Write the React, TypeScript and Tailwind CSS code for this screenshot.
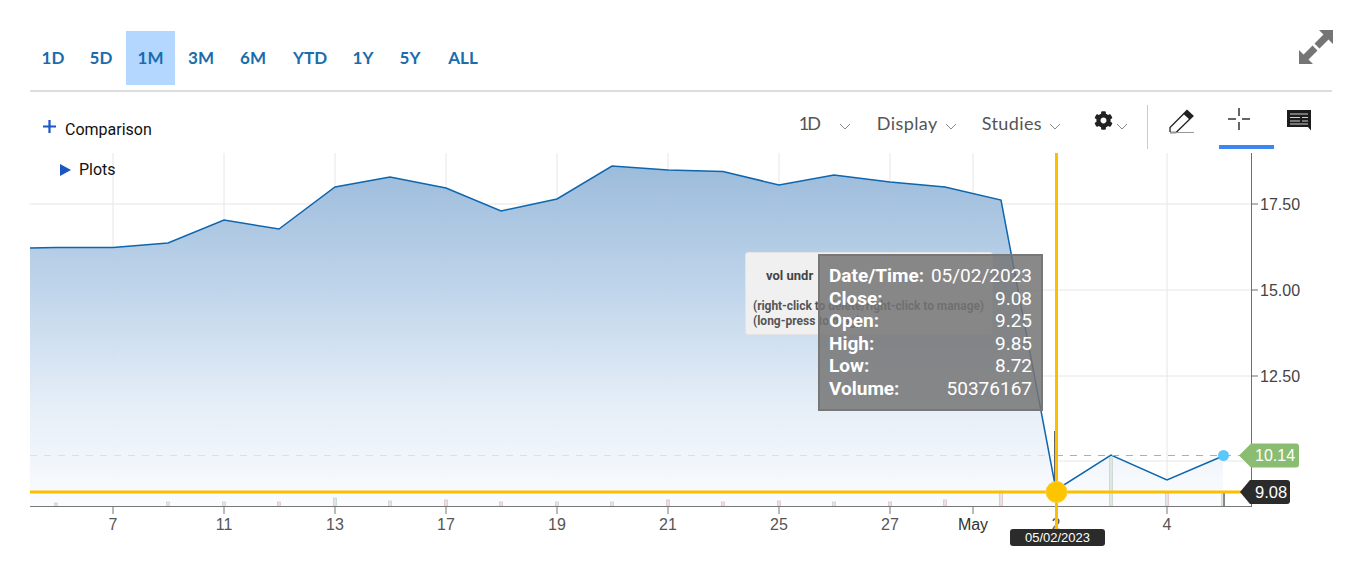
import React from "react";
import { FaCog } from "react-icons/fa";

const ranges = ["1D", "5D", "1M", "3M", "6M", "YTD", "1Y", "5Y", "ALL"];
const rangeX: Record<string, string> = {
  "1D": "w-[46px]", "5D": "w-[50px]", "1M": "w-[49px]", "3M": "w-[52px]", "6M": "w-[52px]", YTD: "w-[62px]", "1Y": "w-[44px]", "5Y": "w-[50px]", ALL: "w-[56px]",
};
const pts: [number, number][] = [[30,248],[56,247.5],[113,247.5],[168,243],[224,220],[279,229],[335,187],[390,177],[446,188],[501,211],[557,199],[612,166],[668,170],[723,171.5],[779,185],[834,175],[890,182],[945,187],[1001,200],[1056,490],[1111,455],[1167,480],[1223,456]];
const line = pts.map((p) => p.join(",")).join(" ");
const area = `30,506 ${line} 1223,506`;
const gridX = [113, 224, 335, 446, 557, 668, 779, 890, 973, 1056, 1167];
const gridY = [204, 290, 376, 461];
const vols: [number, number, boolean][] = [[56,503,true],[168,502,true],[224,502,true],[279,502,false],[335,498,true],[390,501,true],[446,500,false],[501,502,false],[557,502,true],[612,502,true],[668,500,false],[723,502,false],[779,501,false],[834,502,true],[890,502,false],[945,500,false],[1001,491,false],[1111,458,true],[1167,493,false],[1223,492,true]];
const xLabels: [string, number][] = [["7",113],["11",224],["13",335],["17",446],["19",557],["21",668],["25",779],["27",890],["May",973],["2",1056],["4",1167]];
const yLabels: [string, number][] = [["17.50",204],["15.00",290],["12.50",376]];
const rows = [["Date/Time:","05/02/2023"],["Close:","9.08"],["Open:","9.25"],["High:","9.85"],["Low:","8.72"],["Volume:","50376167"]];

function Chevron({ className = "" }: { className?: string }) {
  return (
    <svg className={className} width="12" height="7" viewBox="0 0 12 7" fill="none" stroke="#8a8a8a" strokeWidth="1">
      <path d="M1 1l5 5 5-5" />
    </svg>
  );
}

export default function App() {
  return (
    <div className="relative w-[1358px] h-[573px] bg-white overflow-hidden font-['Lato',sans-serif]">
      <div className="mx-[30px] w-[1302px] h-[92px] pt-[31px] border-b-2 border-[#dddddd] flex justify-between items-start">
        <div className="flex h-[54px]">
          {ranges.map((r) => (
            <div key={r} className={`${rangeX[r]} h-[54px] flex items-center justify-center text-[17px] font-bold text-[#1a6cab] ${r === "1M" ? "bg-[#b3d7ff]" : ""}`}>{r}</div>
          ))}
        </div>
        <svg className="mt-[-2px] mr-[-2px]" width="36" height="36" viewBox="0 0 36 36" fill="#757575">
          <path d="M35 1V15L30.500 10.500L21.500 19.500L16.500 14.500L25.500 5.500L21 1z" />
          <path d="M1 35V21L5.500 25.500L14.500 16.500L19.500 21.500L10.500 30.500L15 35z" />
        </svg>
      </div>

      <div className="mx-[30px] w-[1302px] h-[61px] relative flex items-start">
        <div className="flex items-start pl-[12px] pt-[27px]">
          <svg width="15" height="15" viewBox="0 0 15 15" stroke="#1a56c4" strokeWidth="2.2"><path d="M7.500 1v13M1 7.500h13" /></svg>
          <span className="ml-[8px] mt-[1px] text-[16px] text-[#111] font-['Roboto',sans-serif] leading-[20px]">Comparison</span>
        </div>
        <div className="ml-auto flex items-start h-[61px]">
          <div className="flex items-center pt-[18px] text-[18px] text-[#555] tracking-[0.4px]">
            <span className="tracking-[-2px]">1D</span>
            <Chevron className="ml-[20px] mt-[6px]" />
            <span className="ml-[26px]">Display</span>
            <Chevron className="ml-[7px] mt-[6px]" />
            <span className="ml-[25px]">Studies</span>
            <Chevron className="ml-[7px] mt-[6px]" />
            <FaCog className="ml-[33px] text-[#222] text-[19px] mt-[-6px]" />
            <Chevron className="ml-[3px] mt-[6px]" />
          </div>
          <div className="ml-[19px] mt-[13px] w-px h-[44px] bg-[#cccccc]" />
          <svg className="ml-[20px] mt-[16px]" width="28" height="28" viewBox="0 0 28 28" fill="none">
            <path d="M2 24V19.500L19 2.500l6 5.500L8 24.500H2" stroke="#222" strokeWidth="1.300" />
            <path d="M19 2.500l6 5.500-3.500 3.500-6-5.500z" fill="#222" />
            <path d="M2 24.500h24" stroke="#999" strokeWidth="1" />
          </svg>
          <div className="ml-[23px] w-[55px] h-[57px] border-b-[4px] border-[#3b86f0] flex justify-start pl-[8px] pt-[15px]">
            <svg width="24" height="24" viewBox="0 0 24 24" stroke="#333" strokeWidth="1.500">
              <path d="M12 1v8M12 15v8M1 12h8M15 12h8" />
            </svg>
          </div>
          <svg className="ml-[12px] mt-[17px]" width="26" height="24" viewBox="0 0 26 24">
            <path d="M1 1h24v20.500L22 18H1z" fill="#1c1c1c" />
            <path d="M4 5h18M4 8.500h10M16 8.500h6M4 12h10M16 12h6M4 15h18" stroke="#fff" strokeOpacity="0.8" strokeWidth="1" />
          </svg>
          <div className="w-[20px]" />
        </div>
      </div>

      <svg className="block" width="1358" height="420" viewBox="0 153 1358 420" fontFamily="'Liberation Sans', sans-serif">
        <defs>
          <linearGradient id="f" gradientUnits="userSpaceOnUse" x1="0" y1="166" x2="0" y2="506">
            <stop offset="0" stopColor="#98b9da" />
            <stop offset="0.35" stopColor="#bcd2e9" />
            <stop offset="0.7" stopColor="#e4edf7" />
            <stop offset="1" stopColor="#fbfcfe" />
          </linearGradient>
        </defs>
        {gridX.map((x) => <line key={x} x1={x} x2={x} y1={153} y2={506} stroke="#e6e6e6" />)}
        {gridY.map((y) => <line key={y} x1={30} x2={1251} y1={y} y2={y} stroke="#e6e6e6" />)}
        <polygon points={area} fill="url(#f)" fillOpacity="0.96" />
        {vols.map(([x, y, up]) => (
          <rect key={x} x={x - 1.500} y={y} width="3" height={506 - y} fill="#e4e4e4" stroke={up ? "#bcd6c4" : "#e6bcbc"} strokeWidth="0.7" />
        ))}
        <line x1="1055" x2="1055" y1="431" y2="490" stroke="#333" strokeWidth="1.500" />
        <line x1="1224" x2="1224" y1="492" y2="506" stroke="#333" strokeWidth="1" />
        <polyline points={line} fill="none" stroke="#0d66ae" strokeWidth="1.500" />
        <line x1="30" x2="1056" y1="455.500" y2="455.500" stroke="#94c47e" strokeOpacity="0.3" strokeDasharray="7 7" />
        <line x1="1056" x2="1251" y1="455.500" y2="455.500" stroke="#94c47e" strokeDasharray="7 7" />
        <circle cx="1223.500" cy="455.500" r="5.500" fill="#5ac8fa" />
        <line x1="1251.500" x2="1251.500" y1="153" y2="506" stroke="#6f6f6f" />
        <line x1="30" x2="1252" y1="506.500" y2="506.500" stroke="#777" strokeWidth="1.200" />
        {gridY.slice(0, 3).map((y) => <line key={y} x1="1251" x2="1258" y1={y} y2={y} stroke="#6f6f6f" />)}
        {xLabels.map(([t, x]) => <line key={t} x1={x} x2={x} y1="507" y2="514" stroke="#777" />)}
        {xLabels.map(([t, x]) => (
          <text key={t} x={x} y="530" textAnchor="middle" fontSize="16" fill={t === "May" ? "#333" : "#555"}>{t}</text>
        ))}
        {yLabels.map(([t, y]) => (
          <text key={t} x="1260" y={y + 5.500} fontSize="16" fill="#444">{t}</text>
        ))}
        <line x1="1056.500" x2="1056.500" y1="153" y2="530" stroke="#fcbf00" strokeWidth="3" />
        <line x1="30" x2="1242" y1="492" y2="492" stroke="#fcbf00" strokeWidth="3" />
        <circle cx="1056.500" cy="492" r="10.500" fill="#fdc500" stroke="#fbcf3a" strokeWidth="1" />
        <path d="M1239 455.500l12-12h45a3 3 0 0 1 3 3v18a3 3 0 0 1-3 3h-45z" fill="#8abd72" />
        <text x="1255" y="461" fontSize="16" fill="#fff">10.14</text>
        <path d="M1240 492l10-12h37a3 3 0 0 1 3 3v18a3 3 0 0 1-3 3h-37z" fill="#2b2b2b" />
        <text x="1255" y="498" fontSize="16.500" fill="#fff">9.08</text>
        <rect x="1010" y="529" width="95" height="17" rx="3" fill="#2b2b2b" />
        <text x="1057.500" y="542" textAnchor="middle" fontSize="13" fill="#fff">05/02/2023</text>
      </svg>

      <div className="absolute left-[60px] top-[161px] flex items-center font-['Roboto',sans-serif] text-[16px] text-[#111] leading-[18px]">
        <svg width="11" height="12" viewBox="0 0 11 12" fill="#1a56c4"><path d="M0 0l11 6-11 6z" /></svg>
        <span className="ml-[8px]">Plots</span>
      </div>

      <div className="absolute left-[745px] top-[252px] w-[248px] h-[83px] bg-[#f0f0f0] border border-[#e3e3e3] rounded-[3px] font-['Roboto',sans-serif] text-[12px] font-bold text-[#555] leading-[15px]">
        <div className="pl-[20px] pt-[15px] text-[#444] text-[13px]">vol undr</div>
        <div className="pl-[7px] pt-[16px] whitespace-nowrap tracking-[-0.05px]">(right-click to delete/right-click to manage)</div>
        <div className="pl-[7px] whitespace-nowrap">(long-press to drag)</div>
      </div>

      <div className="absolute left-[818px] top-[254px] w-[225px] h-[157px] bg-[#747474]/85 border-2 border-[#777777] pl-[9px] pr-[9px] pt-[9px] font-['Roboto',sans-serif] text-[19px] leading-[22.500px] text-white">
        {rows.map(([k, v]) => (
          <div key={k} className="flex justify-between whitespace-nowrap">
            <span className="font-bold">{k}</span>
            <span>{v}</span>
          </div>
        ))}
      </div>
    </div>
  );
}
